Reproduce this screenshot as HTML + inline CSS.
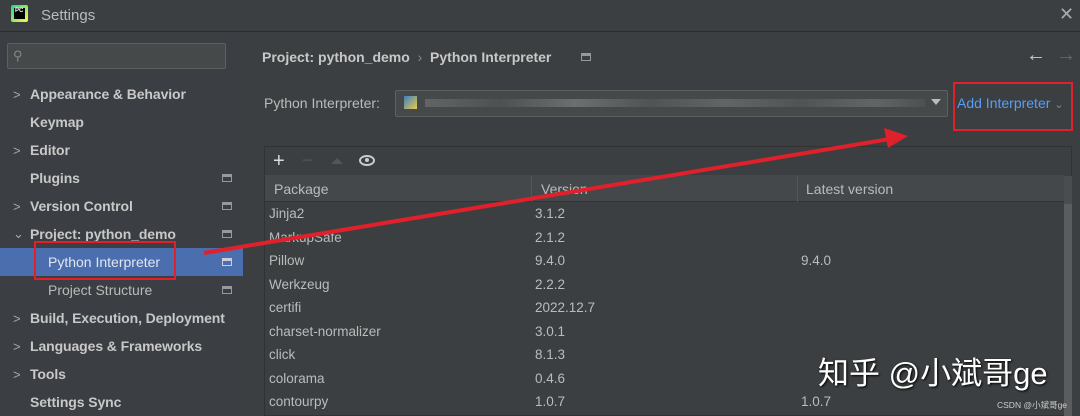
<!DOCTYPE html>
<html><head><meta charset="utf-8"><style>
*{margin:0;padding:0;box-sizing:border-box}
body{width:1080px;height:416px;overflow:hidden;background:#3c3f41;font-family:"Liberation Sans","Noto Sans CJK SC",sans-serif;color:#bbbbbb;position:relative}
.abs{position:absolute}
.title{left:0;top:0;width:1080px;height:32px;background:#3c3f41;border-bottom:1px solid #2b2b2b}
.side{left:0;top:33px;width:243px;height:383px;background:#3b3e43}
.item{position:absolute;left:30px;font-size:14px;font-weight:bold;color:#c8c8c8;letter-spacing:-0.1px}
.sub{position:absolute;left:48px;font-size:14px;color:#bbbbbb}
.arr{position:absolute;left:13px;font-size:13px;color:#aaa}
.ic{position:absolute;left:222px;width:10px;height:8px;border:1px solid #999;border-top-width:3px}
.row{position:absolute;font-size:13.5px;color:#bbbbbb}
</style></head><body>
<div class="abs title"></div>
<div class="abs" style="left:11px;top:5px;width:17px;height:17px;background:linear-gradient(135deg,#21d789,#fcf84a);border-radius:2px"><div style="position:absolute;left:3px;top:3px;width:11px;height:11px;background:#000;color:#fff;font-size:6px;font-weight:bold;line-height:7px;padding-left:1px">PC</div></div>
<div class="abs" style="left:41px;top:7px;font-size:15px;color:#bbb">Settings</div>
<div class="abs" style="left:1059px;top:4px;font-size:18px;color:#aaa">✕</div>
<div class="abs side"></div>
<div class="abs" style="left:7px;top:43px;width:219px;height:26px;background:#45494a;border:1px solid #5e6060;border-radius:2px"></div>
<div class="abs" style="left:13px;top:48px;font-size:13px;color:#888">⚲</div>
<div class="arr" style="top:87px">&gt;</div><div class="item" style="top:86px">Appearance &amp; Behavior</div>
<div class="item" style="top:114px">Keymap</div>
<div class="arr" style="top:143px">&gt;</div><div class="item" style="top:142px">Editor</div>
<div class="item" style="top:170px">Plugins</div><div class="ic" style="top:174px"></div>
<div class="arr" style="top:199px">&gt;</div><div class="item" style="top:198px">Version Control</div><div class="ic" style="top:202px"></div>
<div class="arr" style="top:226px">⌄</div><div class="item" style="top:226px">Project: python_demo</div><div class="ic" style="top:230px"></div>
<div class="abs" style="left:0;top:248px;width:243px;height:28px;background:#4b6eaf"></div>
<div class="sub" style="top:254px;color:#e0e6f0">Python Interpreter</div><div class="ic" style="top:258px;border-color:#ccd"></div>
<div class="abs" style="left:34px;top:241px;width:142px;height:39px;border:2px solid #e0202a"></div>
<div class="sub" style="top:282px">Project Structure</div><div class="ic" style="top:286px"></div>
<div class="arr" style="top:311px">&gt;</div><div class="item" style="top:310px">Build, Execution, Deployment</div>
<div class="arr" style="top:339px">&gt;</div><div class="item" style="top:338px">Languages &amp; Frameworks</div>
<div class="arr" style="top:367px">&gt;</div><div class="item" style="top:366px">Tools</div>
<div class="item" style="top:394px">Settings Sync</div>

<div class="abs" style="left:262px;top:49px;font-size:14px;font-weight:bold;color:#c8c8c8">Project: python_demo &nbsp;<span style="font-weight:normal;color:#888">›</span>&nbsp; Python Interpreter</div>
<div class="abs" style="left:581px;top:53px;width:10px;height:8px;border:1px solid #999;border-top-width:3px"></div>
<div class="abs" style="left:1026px;top:44px;font-size:20px;color:#ccc">←</div>
<div class="abs" style="left:1056px;top:44px;font-size:20px;color:#666">→</div>
<div class="abs" style="left:264px;top:95px;font-size:14px;color:#bbb">Python Interpreter:</div>
<div class="abs" style="left:395px;top:90px;width:553px;height:27px;background:#45494a;border:1px solid #5e6060;border-radius:2px"></div>
<div class="abs" style="left:404px;top:96px;width:13px;height:13px;background:linear-gradient(135deg,#3d7fc0,#e8c94a)"></div>
<div class="abs" style="left:425px;top:99px;width:500px;height:8px;background:linear-gradient(90deg,#777 0,#555 15%,#888 30%,#5a5a5a 45%,#777 60%,#5a5a5a 75%,#777 90%,#555);opacity:.6"></div>
<div class="abs" style="left:931px;top:99px;border-left:5px solid transparent;border-right:5px solid transparent;border-top:6px solid #bbb"></div>
<div class="abs" style="left:957px;top:95px;font-size:14px;color:#589df6">Add Interpreter <span style="color:#888;font-size:11px">⌄</span></div>
<div class="abs" style="left:953px;top:82px;width:120px;height:49px;border:2px solid #e0202a"></div>

<div class="abs" style="left:264px;top:146px;width:808px;height:270px;border:1px solid #323232;background:#3c3f41"></div>
<div class="abs" style="left:273px;top:150px;font-size:20px;color:#ddd">+</div>
<div class="abs" style="left:302px;top:150px;font-size:18px;color:#555">−</div>
<div class="abs" style="left:331px;top:158px;border-left:6px solid transparent;border-right:6px solid transparent;border-bottom:6px solid #555"></div>
<div class="abs" style="left:359px;top:155px;width:16px;height:11px;border:2px solid #ccc;border-radius:50%"><div style="position:absolute;left:4px;top:1px;width:4px;height:4px;background:#ccc;border-radius:50%"></div></div>
<div class="abs" style="left:265px;top:175px;width:799px;height:27px;background:#45484a;border-bottom:1px solid #323232"></div>
<div class="abs" style="left:531px;top:176px;width:1px;height:26px;background:#555"></div>
<div class="abs" style="left:797px;top:176px;width:1px;height:26px;background:#555"></div>
<div class="row" style="left:274px;top:181px;font-size:14px">Package</div>
<div class="row" style="left:541px;top:181px;font-size:14px">Version</div>
<div class="row" style="left:806px;top:181px;font-size:14px">Latest version</div>
<div class="abs" style="left:1064px;top:176px;width:8px;height:240px;background:#4a4c4e"></div>
<div class="abs" style="left:1064px;top:204px;width:8px;height:212px;background:#5a5c5e"></div>

<div class="row" style="left:269px;top:206px">Jinja2</div><div class="row" style="left:535px;top:206px">3.1.2</div>
<div class="row" style="left:269px;top:230px">MarkupSafe</div><div class="row" style="left:535px;top:230px">2.1.2</div>
<div class="row" style="left:269px;top:253px">Pillow</div><div class="row" style="left:535px;top:253px">9.4.0</div><div class="row" style="left:801px;top:253px">9.4.0</div>
<div class="row" style="left:269px;top:277px">Werkzeug</div><div class="row" style="left:535px;top:277px">2.2.2</div>
<div class="row" style="left:269px;top:300px">certifi</div><div class="row" style="left:535px;top:300px">2022.12.7</div>
<div class="row" style="left:269px;top:324px">charset-normalizer</div><div class="row" style="left:535px;top:324px">3.0.1</div>
<div class="row" style="left:269px;top:347px">click</div><div class="row" style="left:535px;top:347px">8.1.3</div>
<div class="row" style="left:269px;top:371px">colorama</div><div class="row" style="left:535px;top:371px">0.4.6</div>
<div class="row" style="left:269px;top:394px">contourpy</div><div class="row" style="left:535px;top:394px">1.0.7</div><div class="row" style="left:801px;top:394px">1.0.7</div>

<svg class="abs" style="left:0;top:0" width="1080" height="416">
<line x1="204" y1="253" x2="890" y2="139" stroke="#e0202a" stroke-width="4"/>
<polygon points="908,136 884,128 888,148" fill="#e0202a"/>
</svg>
<div class="abs" style="left:818px;top:348px;font-size:31px;color:#fff;text-shadow:1px 1px 2px #000">知乎 @小斌哥ge</div>
<div class="abs" style="left:997px;top:399px;font-size:8.5px;color:#ccc">CSDN @小斌哥ge</div>
</body></html>
